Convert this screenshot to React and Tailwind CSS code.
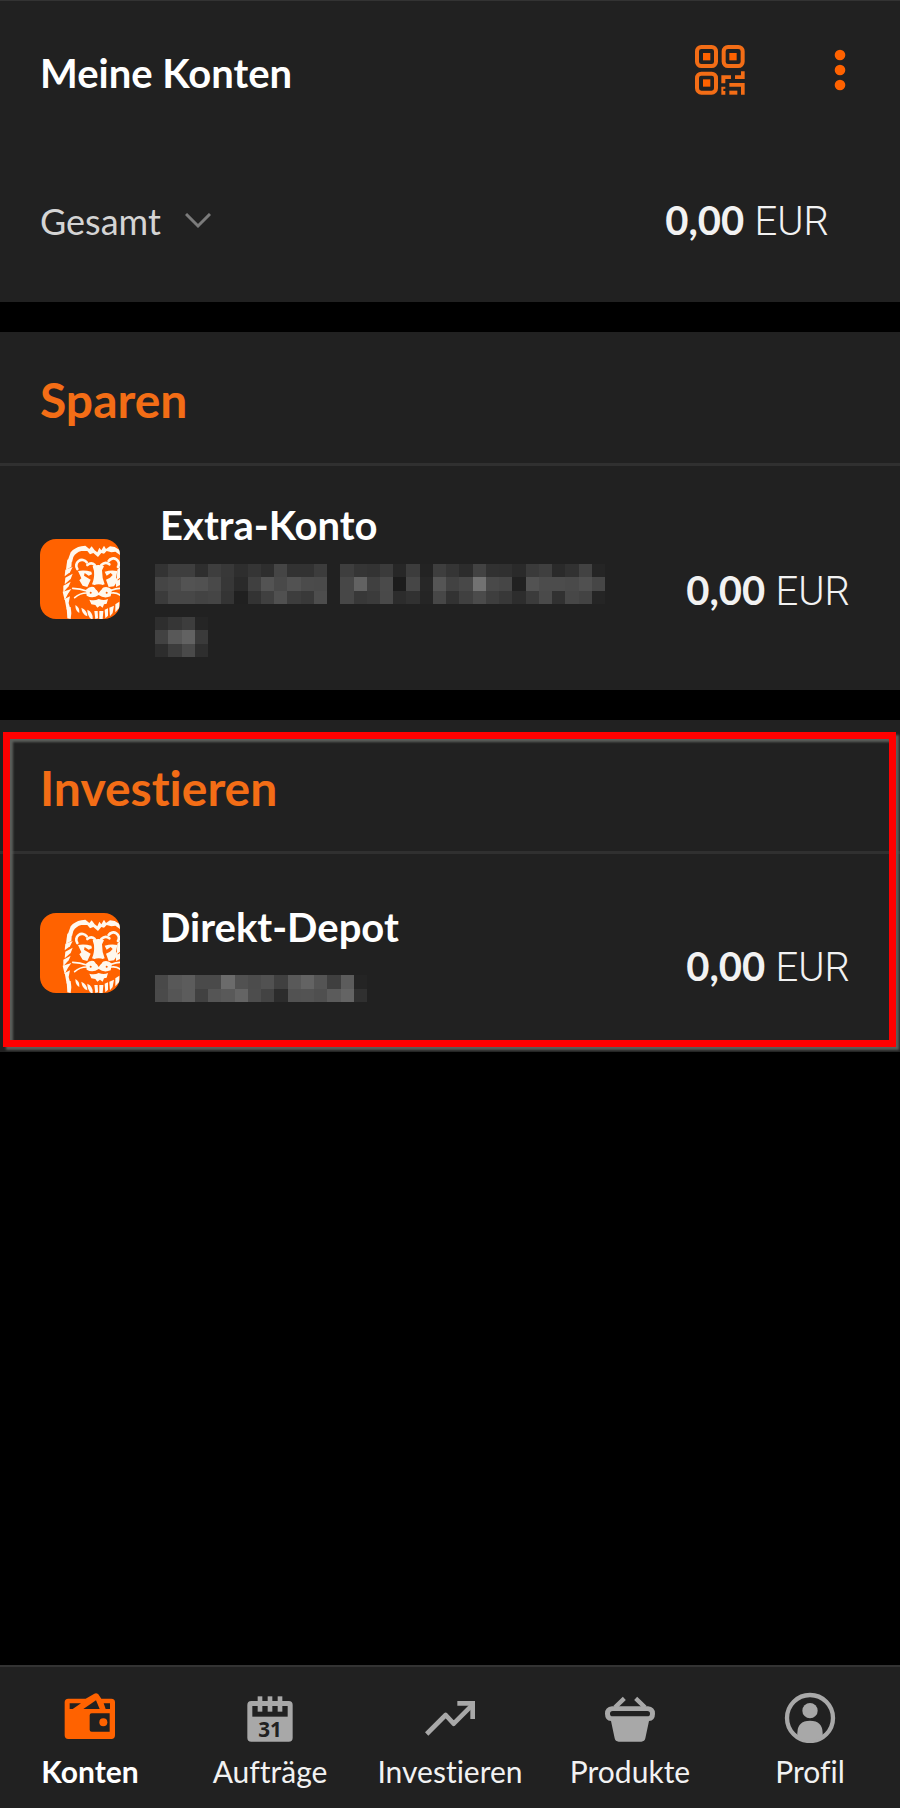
const extraKontoMosaic = [
  "333e3e2e3e382e352e4532323c213e35333b273c233e352c4231302a3a3f2a314225",
  "4549535149372a405349524b4a214762404a1c462755424872494621524c4c4a5046",
  "3b4747434534203340503d394d2147383b492c31254732404b3e382d3b4a31474325",
];

const extraKontoMosaicEnd = ["2e363d25", "4258623a", "2d3c4a2e"];

const direktDepotMosaic = [
  "49585c4a4a6b514c51405963543f5c24",
  "4a555c415559644d432c52534f5b6430",
];

function Mosaic({ rows, className }) {
  const columns = rows[0].length / 2;
  return (
    <svg
      className={className}
      viewBox={`0 0 ${columns} ${rows.length}`}
      preserveAspectRatio="none"
      shapeRendering="crispEdges"
      aria-hidden="true"
    >
      {rows.map((row, y) =>
        row.match(/../g).map((v, x) => (
          <rect key={`${x}-${y}`} x={x} y={y} width="1" height="1" fill={`#${v}${v}${v}`} />
        ))
      )}
    </svg>
  );
}

function LionLogo() {
  return (
    <svg className="size-20 shrink-0 rounded-2xl bg-[#ff6200]" viewBox="0 0 240 240" aria-hidden="true">
      {/* Mane */}
      <g fill="#fff8ee">
        <path d="M84 62 L92 40 Q104 26 124 22 L136 20 L148 30 L155 22 L164 34 L172 40 L178 26 L184 34 L192 20 L198 30 L210 22 L224 24 L240 34 V48 L226 38 L214 40 L200 36 L192 44 L184 42 L174 54 L160 42 L150 46 L142 36 L124 36 Q108 40 100 54 L96 70 Z" />
        <path d="M82 62 L96 58 L94 84 L78 92 L80 76 Z" />
        <path d="M76 92 L98 84 L90 100 L74 112 Z" />
        <path d="M76 116 L98 104 L92 120 L74 136 Z" />
        <path d="M70 140 L92 128 L86 142 L70 160 Z" />
        <path d="M68 158 L94 150 L84 164 L74 184 Z" />
        <path d="M74 180 L90 172 L86 192 L90 206 L80 212 Z" />
        <path d="M80 206 L92 204 L94 222 L92 240 L82 238 Z" />
        <path d="M106 198 Q120 206 118 222 Q106 216 106 198 Z" />
        <path d="M124 206 Q142 214 142 232 Q126 226 124 206 Z" />
        <path d="M142 212 Q160 220 158 240 H154 Q142 232 142 212 Z" />
        <path d="M163 216 H173 L174 238 L166 240 Z" />
        <path d="M178 216 H190 L188 240 H178 Z" />
        <path d="M194 212 L204 208 L204 230 L196 238 Z" />
        <path d="M208 206 L222 200 L218 222 L210 232 Z" />
        <path d="M226 196 L238 188 L238 206 L226 220 Z" />
        <path d="M232 92 L240 84 V116 L230 124 Z" />
        <path d="M228 128 L240 120 V138 L228 144 Z" />
      </g>
      {/* Ears and brows */}
      <g fill="none" stroke="#fff8ee" strokeWidth="8" strokeLinecap="round">
        <path d="M112 90 A16 16 0 1 1 140 70" />
        <path d="M206 66 A16 16 0 1 1 234 84" />
        <path d="M142 78 Q154 68 164 78" />
        <path d="M184 78 Q196 66 208 76" />
      </g>
      {/* Face */}
      <g fill="#fff8ee">
        <path d="M158 82 Q175 74 192 82 L186 94 Q186 118 194 136 L176 142 L156 136 Q164 118 162 96 Z" />
        <path d="M114 96 Q132 92 154 98 L156 106 L146 110 L134 102 L132 110 L142 116 L152 122 L142 144 L128 140 L118 124 L124 118 Z" />
        <path d="M194 98 Q214 92 232 96 L228 116 L234 124 L222 142 L206 144 L198 122 L210 116 L218 108 L212 102 L200 110 Z" />
        <path d="M138 152 Q152 138 166 146 L176 162 L188 146 Q204 140 216 152 L212 172 Q192 180 176 168 Q158 180 140 170 Z" />
        <path d="M148 182 Q164 186 176 180 Q192 186 204 180 L200 194 L192 196 L188 206 L180 200 L172 206 L166 198 L154 196 Z" />
      </g>
      <g fill="none" stroke="#fff8ee" strokeWidth="5" strokeLinecap="round">
        <path d="M98 148 Q120 148 140 156" />
        <path d="M104 176 Q120 162 140 162" />
        <path d="M214 154 Q228 148 240 148" />
        <path d="M214 162 Q230 160 240 168" />
      </g>
      {/* Nose */}
      <path d="M160 140 Q176 132 192 140 L184 152 L176 156 L168 152 Z" fill="#ff6200" />
      <g fill="#ff6200">
        <circle cx="152" cy="161" r="3" />
        <circle cx="200" cy="161" r="3" />
      </g>
    </svg>
  );
}

function QrIcon() {
  return (
    <svg className="size-[50px]" viewBox="0 0 150 150" fill="none" aria-hidden="true">
      <g stroke="#f36d16" strokeWidth="12">
        <rect x="6" y="6" width="57" height="57" rx="13" />
        <rect x="86" y="6" width="57" height="57" rx="13" />
        <rect x="6" y="86" width="57" height="57" rx="13" />
      </g>
      <g fill="#ff6200">
        <rect x="24" y="24" width="22" height="22" />
        <rect x="103" y="24" width="22" height="22" />
        <rect x="24" y="103" width="22" height="22" />
      </g>
      <g fill="#f36d16">
        <path d="M79 91h29v11H91v13H79z" />
        <path d="M120 91h18V79h11v23h-29z" />
        <path d="M103 114h46v35h-11v-24h-35z" />
        <path d="M79 125h12v6h-6v7h6v11H79z" />
        <rect x="103" y="137" width="24" height="12" />
      </g>
    </svg>
  );
}

function DotsIcon() {
  return (
    <svg className="h-[50px] w-3" viewBox="0 0 12 50" fill="#ff6200" aria-hidden="true">
      <circle cx="6" cy="10" r="5.3" />
      <circle cx="6" cy="25" r="5.3" />
      <circle cx="6" cy="40" r="5.3" />
    </svg>
  );
}

function WalletIcon() {
  return (
    <svg className="size-[54px]" viewBox="0 0 162 162" aria-hidden="true">
      <path
        fill="#ff6200"
        fillRule="evenodd"
        d="M16 29 H68 L94 14 Q100 10 106 16 L115 29 H145 Q156 29 156 40 V139 Q156 150 145 150 H16 Q5 150 5 139 V40 Q5 29 16 29 Z M20 43 V60 H29 L54 43 Z M61 60 H110 L99 34 Z M122 43 L128 60 H141 V43 Z M86 73 Q80 73 80 79 V122 Q80 128 86 128 H140 V73 Z"
      />
      <circle cx="121" cy="100" r="12" fill="#ff6200" />
    </svg>
  );
}

function CalendarIcon() {
  return (
    <svg className="size-[54px]" viewBox="0 0 162 162" aria-hidden="true">
      <rect x="13" y="36" width="136" height="122" rx="12" fill="#a8a8a8" />
      <rect x="28" y="51" width="106" height="32" fill="#212121" />
      <g fill="#a8a8a8">
        <rect x="44" y="22" width="14" height="46" />
        <rect x="74" y="22" width="14" height="46" />
        <rect x="104" y="22" width="14" height="46" />
      </g>
      <text
        x="81"
        y="143"
        textAnchor="middle"
        fill="#212121"
        className="font-['Noto_Sans',sans-serif] text-[62px] font-bold"
      >
        31
      </text>
    </svg>
  );
}

function TrendIcon() {
  return (
    <svg className="size-[54px]" viewBox="0 0 162 162" fill="none" stroke="#a8a8a8" aria-hidden="true">
      <path d="M11 135 L68 78 L92 104 L146 50" strokeWidth="14" strokeLinejoin="round" />
      <path d="M103 43 H149 V90" strokeWidth="14" />
    </svg>
  );
}

function BasketIcon() {
  return (
    <svg className="size-[54px]" viewBox="0 0 162 162" aria-hidden="true">
      <path d="M64 28 L36 55 M98 28 L126 55" stroke="#a8a8a8" strokeWidth="13" />
      <path
        fill="#a8a8a8"
        fillRule="evenodd"
        d="M27 52 H135 Q156 54 156 74 Q156 94 138 96 L127 148 Q125 158 115 158 H47 Q37 158 35 148 L24 96 Q6 94 6 74 Q6 54 27 52 Z M29 66 Q21 66 21 74 Q21 82 29 82 H133 Q141 82 141 74 Q141 66 133 66 Z"
      />
    </svg>
  );
}

function ProfileIcon() {
  return (
    <svg className="size-[54px]" viewBox="0 0 162 162" aria-hidden="true">
      <circle cx="81" cy="87" r="69" fill="none" stroke="#a8a8a8" strokeWidth="13" />
      <circle cx="81" cy="65" r="23" fill="#a8a8a8" />
      <path d="M43 142 V133 Q43 95 81 95 Q119 95 119 133 V142 Q102 156 81 156 Q60 156 43 142 Z" fill="#a8a8a8" />
    </svg>
  );
}

function Amount() {
  return (
    <p className="shrink-0 text-[40px] leading-[48px] text-[#f2f2f2]">
      <span className="font-bold">0,00</span>{" "}
      <span className="font-[Roboto,sans-serif] font-light">EUR</span>
    </p>
  );
}

const tabs = [
  { label: "Konten", Icon: WalletIcon, active: true },
  { label: "Aufträge", Icon: CalendarIcon },
  { label: "Investieren", Icon: TrendIcon },
  { label: "Produkte", Icon: BasketIcon },
  { label: "Profil", Icon: ProfileIcon },
];

export default function App() {
  return (
    <div className="flex min-h-screen flex-col bg-black font-[Lato,sans-serif] text-white [font-variant-ligatures:none]">
      <header className="border-t border-[#333333] bg-[#212121] pb-[53px]">
        <div className="flex items-start justify-between pt-11 pr-[54px] pl-10">
          <h1 className="text-[40px] leading-[56px] font-bold">Meine Konten</h1>
          <div className="flex items-center gap-[89px]">
            <button type="button" aria-label="QR-Code scannen">
              <QrIcon />
            </button>
            <button type="button" aria-label="Menü">
              <DotsIcon />
            </button>
          </div>
        </div>
        <div className="flex items-center justify-between pt-[92px] pr-[71px] pl-10">
          <button type="button" className="flex items-center gap-6 text-4xl leading-[56px] text-[#d4d4d4]">
            Gesamt
            <svg className="h-4 w-[26px]" viewBox="0 0 26 16" fill="none" aria-hidden="true">
              <path d="M1 1 L13 13 L25 1" stroke="#7b7b7b" strokeWidth="3" />
            </svg>
          </button>
          <Amount />
        </div>
      </header>

      <main className="flex flex-col">
        <section className="mt-[30px] bg-[#212121]">
          <h2 className="border-b-[3px] border-[#303030] px-10 pt-10 pb-[35px] text-5xl leading-[56px] font-bold text-[#f36d16]">
            Sparen
          </h2>
          <div className="flex items-center pt-[35px] pr-[50px] pb-[33px] pl-10">
            <LionLogo />
            <div className="ml-[35px] flex-1">
              <h3 className="pl-[5px] text-[40px] leading-[48px] font-bold">Extra-Konto</h3>
              <Mosaic rows={extraKontoMosaic} className="mt-[15px] h-10 w-[450px]" />
              <Mosaic rows={extraKontoMosaicEnd} className="mt-[13px] h-10 w-[53px]" />
            </div>
            <div className="pt-6">
              <Amount />
            </div>
          </div>
        </section>

        <section className="relative mt-[30px] bg-[#212121]">
          <h2 className="border-b-[3px] border-[#303030] px-10 pt-10 pb-[35px] text-5xl leading-[56px] font-bold text-[#f36d16]">
            Investieren
          </h2>
          <div className="flex items-center pt-[49px] pr-[50px] pb-[50px] pl-10">
            <LionLogo />
            <div className="ml-[35px] flex-1">
              <h3 className="pl-[5px] text-[40px] leading-[48px] font-bold">Direkt-Depot</h3>
              <Mosaic rows={direktDepotMosaic} className="mt-6 h-[27px] w-[212px]" />
            </div>
            <div className="pt-7">
              <Amount />
            </div>
          </div>
          {/* Highlight frame over the section */}
          <div className="pointer-events-none absolute top-3 right-1 bottom-[5px] left-[3px] border-[7px] border-[#ff0000] drop-shadow-[3px_3px_1px_#5a5e5a]" />
        </section>
      </main>

      <nav className="mt-auto grid grid-cols-5 border-t-2 border-[#333333] bg-[#212121] pt-[22px] pb-[17px]">
        {tabs.map(({ label, Icon, active }) => (
          <a
            key={label}
            href="#"
            aria-current={active ? "page" : undefined}
            className={`flex flex-col items-center gap-2 text-[30px] leading-10 ${
              active ? "font-bold text-white" : "text-[#f2f2f2]"
            }`}
          >
            <Icon />
            {label}
          </a>
        ))}
      </nav>
    </div>
  );
}
